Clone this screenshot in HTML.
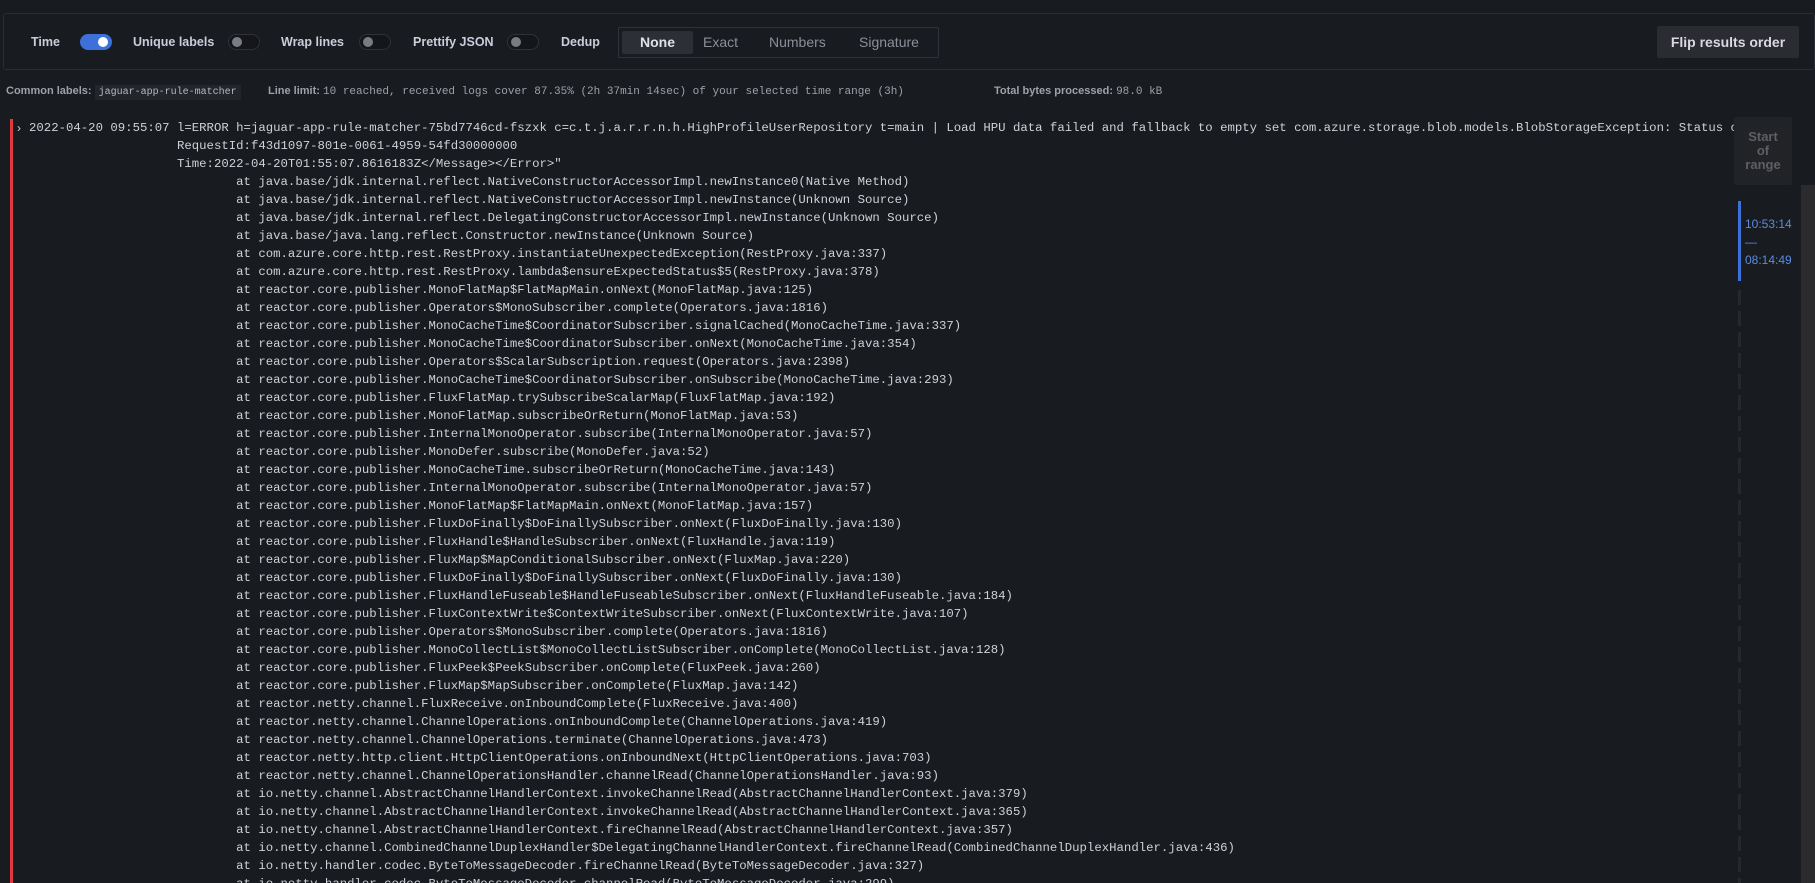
<!DOCTYPE html>
<html><head><meta charset="utf-8"><style>
*{box-sizing:border-box;margin:0;padding:0}
body{width:1815px;height:883px;background:#181b1f;overflow:hidden;font-family:"Liberation Sans",sans-serif;color:#ccccdc;position:relative}
.panel{position:absolute;left:3px;top:13px;width:1812px;height:57px;border:1px solid #2a2d33;border-radius:3px}
.lbl{position:absolute;top:35px;font-size:12.5px;font-weight:bold;color:#ccccdc}
.tg{position:absolute;top:34px;width:32px;height:16px;border-radius:8px;border:1px solid #2f3238;background:#141619}
.tg::after{content:"";position:absolute;top:2px;left:3px;width:10px;height:10px;border-radius:50%;background:#7a7c84}
.tg.on{background:#3d71d9;border-color:#3d71d9}
.tg.on::after{left:17px;background:#fff}
.seg{position:absolute;left:618px;top:27px;width:321px;height:31px;border:1px solid #2f3238;border-radius:2px}
.seg span{position:absolute;top:3px;height:23px;line-height:23px;font-size:14px;color:#8e8e9a}
.seg .sel{left:3px;width:71px;background:#2c2f35;border-radius:2px;color:#e0e0ea;font-weight:bold;text-align:center}
.flip{position:absolute;left:1657px;top:26px;width:142px;height:32px;background:#2a2c31;border-radius:2px;font-size:14px;font-weight:bold;color:#d8d9e2;text-align:center;line-height:32px}
.info{position:absolute;top:85px;font-size:11px;color:#9fa0a8;white-space:nowrap}
.mono{font-family:"Liberation Mono",monospace}
.chip{background:#22252a;padding:2px 4px;font-size:10px;color:#b8b9c2}
.red{position:absolute;left:10px;top:119px;width:3px;height:764px;background:#e0393e}
.car{position:absolute;left:17px;top:119px;font-size:12px;line-height:18px;color:#d0d1d8}
pre{position:absolute;left:29px;top:119px;width:1705px;height:764px;overflow:hidden;font-family:"Liberation Mono",monospace;font-size:12.33px;line-height:18px;color:#d0d1d8;white-space:pre}
.sor{position:absolute;left:1734px;top:117px;width:58px;height:68px;background:#212327;border-radius:2px;color:#5d5f66;font-size:13px;font-weight:bold;text-align:center;line-height:14px;padding-top:13px}
.bl{position:absolute;left:1738px;top:201px;width:3px;height:80px;background:#3d71d9}
.tm{position:absolute;left:1745px;top:215px;color:#5c8be0;font-size:12px;line-height:18px}
.dash{position:absolute;left:1738px;top:290px;width:3px;height:593px;background:repeating-linear-gradient(#25282d 0 15px,transparent 15px 21px)}
.sb{position:absolute;left:1801px;top:185px;width:14px;height:698px;background:#2b2b2d}
</style></head><body>
<div class="panel"></div>
<div class="lbl" style="left:31px">Time</div><div class="tg on" style="left:80px"></div>
<div class="lbl" style="left:133px">Unique labels</div><div class="tg" style="left:228px"></div>
<div class="lbl" style="left:281px">Wrap lines</div><div class="tg" style="left:359px"></div>
<div class="lbl" style="left:413px">Prettify JSON</div><div class="tg" style="left:507px"></div>
<div class="lbl" style="left:561px">Dedup</div>
<div class="seg"><span class="sel">None</span><span style="left:84px">Exact</span><span style="left:150px">Numbers</span><span style="left:240px">Signature</span></div>
<div class="flip">Flip results order</div>
<div class="info" style="left:6px"><b>Common labels:</b> <span class="mono chip">jaguar-app-rule-matcher</span></div>
<div class="info" style="left:268px"><b>Line limit:</b> <span class="mono">10 reached, received logs cover 87.35% (2h 37min 14sec) of your selected time range (3h)</span></div>
<div class="info" style="left:994px"><b>Total bytes processed:</b> <span class="mono">98.0 kB</span></div>
<div class="red"></div>
<div class="car">›</div>
<pre>2022-04-20 09:55:07 l=ERROR h=jaguar-app-rule-matcher-75bd7746cd-fszxk c=c.t.j.a.r.r.n.h.HighProfileUserRepository t=main | Load HPU data failed and fallback to empty set com.azure.storage.blob.models.BlobStorageException: Status code 403
                    RequestId:f43d1097-801e-0061-4959-54fd30000000
                    Time:2022-04-20T01:55:07.8616183Z&lt;/Message&gt;&lt;/Error&gt;"
                            at java.base/jdk.internal.reflect.NativeConstructorAccessorImpl.newInstance0(Native Method)
                            at java.base/jdk.internal.reflect.NativeConstructorAccessorImpl.newInstance(Unknown Source)
                            at java.base/jdk.internal.reflect.DelegatingConstructorAccessorImpl.newInstance(Unknown Source)
                            at java.base/java.lang.reflect.Constructor.newInstance(Unknown Source)
                            at com.azure.core.http.rest.RestProxy.instantiateUnexpectedException(RestProxy.java:337)
                            at com.azure.core.http.rest.RestProxy.lambda$ensureExpectedStatus$5(RestProxy.java:378)
                            at reactor.core.publisher.MonoFlatMap$FlatMapMain.onNext(MonoFlatMap.java:125)
                            at reactor.core.publisher.Operators$MonoSubscriber.complete(Operators.java:1816)
                            at reactor.core.publisher.MonoCacheTime$CoordinatorSubscriber.signalCached(MonoCacheTime.java:337)
                            at reactor.core.publisher.MonoCacheTime$CoordinatorSubscriber.onNext(MonoCacheTime.java:354)
                            at reactor.core.publisher.Operators$ScalarSubscription.request(Operators.java:2398)
                            at reactor.core.publisher.MonoCacheTime$CoordinatorSubscriber.onSubscribe(MonoCacheTime.java:293)
                            at reactor.core.publisher.FluxFlatMap.trySubscribeScalarMap(FluxFlatMap.java:192)
                            at reactor.core.publisher.MonoFlatMap.subscribeOrReturn(MonoFlatMap.java:53)
                            at reactor.core.publisher.InternalMonoOperator.subscribe(InternalMonoOperator.java:57)
                            at reactor.core.publisher.MonoDefer.subscribe(MonoDefer.java:52)
                            at reactor.core.publisher.MonoCacheTime.subscribeOrReturn(MonoCacheTime.java:143)
                            at reactor.core.publisher.InternalMonoOperator.subscribe(InternalMonoOperator.java:57)
                            at reactor.core.publisher.MonoFlatMap$FlatMapMain.onNext(MonoFlatMap.java:157)
                            at reactor.core.publisher.FluxDoFinally$DoFinallySubscriber.onNext(FluxDoFinally.java:130)
                            at reactor.core.publisher.FluxHandle$HandleSubscriber.onNext(FluxHandle.java:119)
                            at reactor.core.publisher.FluxMap$MapConditionalSubscriber.onNext(FluxMap.java:220)
                            at reactor.core.publisher.FluxDoFinally$DoFinallySubscriber.onNext(FluxDoFinally.java:130)
                            at reactor.core.publisher.FluxHandleFuseable$HandleFuseableSubscriber.onNext(FluxHandleFuseable.java:184)
                            at reactor.core.publisher.FluxContextWrite$ContextWriteSubscriber.onNext(FluxContextWrite.java:107)
                            at reactor.core.publisher.Operators$MonoSubscriber.complete(Operators.java:1816)
                            at reactor.core.publisher.MonoCollectList$MonoCollectListSubscriber.onComplete(MonoCollectList.java:128)
                            at reactor.core.publisher.FluxPeek$PeekSubscriber.onComplete(FluxPeek.java:260)
                            at reactor.core.publisher.FluxMap$MapSubscriber.onComplete(FluxMap.java:142)
                            at reactor.netty.channel.FluxReceive.onInboundComplete(FluxReceive.java:400)
                            at reactor.netty.channel.ChannelOperations.onInboundComplete(ChannelOperations.java:419)
                            at reactor.netty.channel.ChannelOperations.terminate(ChannelOperations.java:473)
                            at reactor.netty.http.client.HttpClientOperations.onInboundNext(HttpClientOperations.java:703)
                            at reactor.netty.channel.ChannelOperationsHandler.channelRead(ChannelOperationsHandler.java:93)
                            at io.netty.channel.AbstractChannelHandlerContext.invokeChannelRead(AbstractChannelHandlerContext.java:379)
                            at io.netty.channel.AbstractChannelHandlerContext.invokeChannelRead(AbstractChannelHandlerContext.java:365)
                            at io.netty.channel.AbstractChannelHandlerContext.fireChannelRead(AbstractChannelHandlerContext.java:357)
                            at io.netty.channel.CombinedChannelDuplexHandler$DelegatingChannelHandlerContext.fireChannelRead(CombinedChannelDuplexHandler.java:436)
                            at io.netty.handler.codec.ByteToMessageDecoder.fireChannelRead(ByteToMessageDecoder.java:327)
                            at io.netty.handler.codec.ByteToMessageDecoder.channelRead(ByteToMessageDecoder.java:299)</pre>
<div class="sor">Start<br>of<br>range</div>
<div class="bl"></div>
<div class="tm">10:53:14<br>—<br>08:14:49</div>
<div class="dash"></div>
<div class="sb"></div>
</body></html>
